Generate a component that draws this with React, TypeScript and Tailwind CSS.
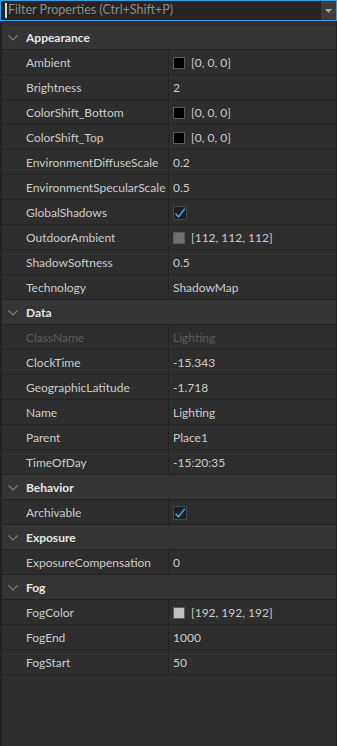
import React from "react";

type Prop = {
  name: string;
  value?: string;
  swatch?: string;
  check?: boolean;
  disabled?: boolean;
};

const SECTIONS: { title: string; props: Prop[] }[] = [
  {
    title: "Appearance",
    props: [
      { name: "Ambient", value: "[0, 0, 0]", swatch: "#000000" },
      { name: "Brightness", value: "2" },
      { name: "ColorShift_Bottom", value: "[0, 0, 0]", swatch: "#000000" },
      { name: "ColorShift_Top", value: "[0, 0, 0]", swatch: "#000000" },
      { name: "EnvironmentDiffuseScale", value: "0.2" },
      { name: "EnvironmentSpecularScale", value: "0.5" },
      { name: "GlobalShadows", check: true },
      { name: "OutdoorAmbient", value: "[112, 112, 112]", swatch: "#707070" },
      { name: "ShadowSoftness", value: "0.5" },
      { name: "Technology", value: "ShadowMap" },
    ],
  },
  {
    title: "Data",
    props: [
      { name: "ClassName", value: "Lighting", disabled: true },
      { name: "ClockTime", value: "-15.343" },
      { name: "GeographicLatitude", value: "-1.718" },
      { name: "Name", value: "Lighting" },
      { name: "Parent", value: "Place1" },
      { name: "TimeOfDay", value: "-15:20:35" },
    ],
  },
  {
    title: "Behavior",
    props: [{ name: "Archivable", check: true }],
  },
  {
    title: "Exposure",
    props: [{ name: "ExposureCompensation", value: "0" }],
  },
  {
    title: "Fog",
    props: [
      { name: "FogColor", value: "[192, 192, 192]", swatch: "#c0c0c0" },
      { name: "FogEnd", value: "1000" },
      { name: "FogStart", value: "50" },
    ],
  },
];

function Chevron() {
  return (
    <svg width="10" height="6" viewBox="0 0 10 6" className="shrink-0">
      <path d="M0.5 0.5 L5 5 L9.5 0.5" fill="none" stroke="#7d7d7d" strokeWidth="1.2" />
    </svg>
  );
}

function Check() {
  return (
    <div className="w-[14px] h-[14px] bg-[#1f1f1f] border border-[#474747] flex items-center justify-center">
      <svg width="12" height="12" viewBox="0 0 12 12">
        <path d="M1.5 6.5 L4.5 9.8 L10.8 1.8" fill="none" stroke="#3aa0e8" strokeWidth="1.6" />
      </svg>
    </div>
  );
}

function Row({ p }: { p: Prop }) {
  const color = p.disabled ? "text-[#5c5c5c]" : "text-[#cccccc]";
  return (
    <div className="flex h-[25px] border-b border-[#232323]">
      <div className={`w-[167px] shrink-0 border-r border-[#232323] flex items-center pt-[1px] pl-[24px] ${color}`}>
        {p.name}
      </div>
      <div className={`flex-1 flex items-center pt-[1px] pl-[4px] ${color}`}>
        {p.check && <Check />}
        {p.swatch && (
          <div
            className="w-[12px] h-[12px] border border-[#5a5a5a] mr-[6px]"
            style={{ background: p.swatch }}
          />
        )}
        {p.value}
      </div>
    </div>
  );
}

export default function App() {
  return (
    <div
      className="w-[337px] h-[746px] bg-[#2e2e2e] flex flex-col text-[12px] overflow-hidden"
      style={{ fontFamily: "Lato, 'Open Sans', sans-serif" }}
    >
      {/* Filter box */}
      <div className="h-[21px] shrink-0 flex border border-[#35a0e8] bg-[#252525]">
        <div className="flex-1 flex items-center pl-[4px] text-[12.5px] text-[#8c8c8c]">
          <div className="w-[2px] h-[15px] bg-[#d8d8d8] mr-[1px]" />
          Filter Properties (Ctrl+Shift+P)
        </div>
        <div className="w-[15px] bg-[#3d3d3d] flex items-center justify-center">
          <svg width="7" height="4" viewBox="0 0 7 4">
            <path d="M0 0 L7 0 L3.5 4 Z" fill="#a8a8a8" />
          </svg>
        </div>
      </div>

      {/* Properties */}
      <div className="flex-1 border-l-2 border-r border-t border-[#222222] pt-[3px]">
        {SECTIONS.map((s) => (
          <div key={s.title}>
            <div className="h-[25px] bg-[#353535] border-b border-[#232323] flex items-center pt-[1px] pl-[6px] gap-[8px]">
              <Chevron />
              <span className="font-bold text-[#e6e6e6]">{s.title}</span>
            </div>
            {s.props.map((p) => (
              <Row key={p.name} p={p} />
            ))}
          </div>
        ))}
      </div>
    </div>
  );
}
